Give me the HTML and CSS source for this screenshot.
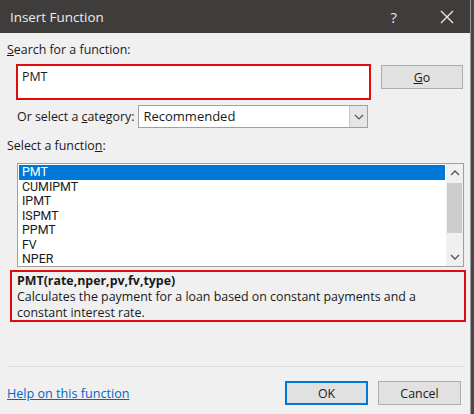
FILE: index.html
```html
<!DOCTYPE html>
<html>
<head>
<meta charset="utf-8">
<link rel="stylesheet" href="styles.css">
</head>
<body>
<div class="dialog">
  <div class="titlebar">
    <span class="title">Insert Function</span>
    <span class="help">?</span>
    <svg class="close" width="14" height="14" viewBox="0 0 14 14"><path d="M1 1 L13 13 M13 1 L1 13" stroke="#e6e6e6" stroke-width="1.4"/></svg>
  </div>
  <div class="content">
    <div class="label search-label"><u>S</u>earch for a function:</div>
    <div class="search-row">
      <div class="search-box">PMT</div>
      <div class="btn go"><u>G</u>o</div>
    </div>
    <div class="cat-row">
      <span class="label">Or select a <u>c</u>ategory:</span>
      <div class="select">
        <span class="select-text">Recommended</span>
        <span class="select-arrow"><svg width="10" height="6" viewBox="0 0 10 6"><path d="M1 1 L5 5 L9 1" fill="none" stroke="#555" stroke-width="1.2"/></svg></span>
      </div>
    </div>
    <div class="label func-label">Select a functio<u>n</u>:</div>
    <div class="listbox">
      <ul class="items">
        <li class="sel">PMT</li>
        <li>CUMIPMT</li>
        <li>IPMT</li>
        <li>ISPMT</li>
        <li>PPMT</li>
        <li>FV</li>
        <li>NPER</li>
      </ul>
      <div class="scrollbar">
        <svg class="arr" width="10" height="6" viewBox="0 0 10 6"><path d="M1 5 L5 1 L9 5" fill="none" stroke="#555" stroke-width="1.4"/></svg>
        <div class="track"><div class="thumb"></div></div>
        <svg class="arr" width="10" height="6" viewBox="0 0 10 6"><path d="M1 1 L5 5 L9 1" fill="none" stroke="#555" stroke-width="1.4"/></svg>
      </div>
    </div>
    <div class="desc">
      <div class="sig">PMT(rate,nper,pv,fv,type)</div>
      <div class="desc-text">Calculates the payment for a loan based on constant payments and a constant interest rate.</div>
    </div>
    <div class="separator"></div>
    <div class="footer">
      <a class="link" href="#">Help on this function</a>
      <div class="buttons">
        <div class="btn ok">OK</div>
        <div class="btn cancel">Cancel</div>
      </div>
    </div>
  </div>
</div>
</body>
</html>
```

FILE: styles.css
```css
html, body {
  margin: 0;
  padding: 0;
  background: #4a4847;
  height: 414px;
  overflow: hidden;
}
body {
  font-family: "Open Sans", "Noto Sans", sans-serif;
  font-size: 12.4px;
  color: #1a1a1a;
}
.dialog {
  width: 470px;
  height: 414px;
  background: #f0f0f0;
  border-right: 1px solid #9a9a9a;
  display: flex;
  flex-direction: column;
}
.titlebar {
  height: 33px;
  background: #3f3d3b;
  display: flex;
  align-items: center;
  padding-left: 10px;
  flex-shrink: 0;
}
.title {
  color: #ececec;
  font-size: 13.4px;
  flex: 1;
}
.help {
  color: #e6e6e6;
  font-size: 15px;
  margin-right: 43px;
}
.close {
  margin-right: 16px;
}
.content {
  padding: 0 7px;
  display: flex;
  flex-direction: column;
}
.label {
  line-height: 15px;
}
.search-label {
  margin-top: 9px;
}
.search-row {
  display: flex;
  margin-top: 7px;
}
.search-box {
  margin-left: 9px;
  width: 350px;
  border: 2px solid #e00c0c;
  background: #fff;
  padding: 4px 0 0 4px;
  box-sizing: content-box;
  height: 28px;
  line-height: 13px;
}
.btn {
  width: 81px;
  height: 22px;
  border: 1px solid #adadad;
  background: #e1e1e1;
  display: flex;
  align-items: center;
  justify-content: center;
}
.go {
  margin-left: 10px;
  margin-top: 1px;
}
.cat-row {
  display: flex;
  align-items: center;
  margin-top: 5px;
  padding-left: 10px;
}
.select {
  margin-left: 4px;
  width: 228px;
  height: 21px;
  border: 1px solid #a0a0a0;
  background: #fff;
  display: flex;
}
.select-text {
  flex: 1;
  padding-left: 4px;
  line-height: 21px;
  font-size: 13px;
}
.select-arrow {
  width: 17px;
  background: #e5e5e5;
  border-left: 1px solid #c8c8c8;
  display: flex;
  align-items: center;
  justify-content: center;
}
.func-label {
  margin-top: 10px;
}
.listbox {
  margin-top: 10px;
  margin-left: 10px;
  width: 445px;
  height: 102px;
  border: 1px solid #a0a0a0;
  background: #fff;
  display: flex;
}
.items {
  list-style: none;
  margin: 0;
  padding: 1px 0 0 1px;
  flex: 1;
  font-family: Roboto, "Liberation Sans", sans-serif;
}
.items li {
  height: 14.5px;
  line-height: 14.5px;
  padding-left: 3px;
  font-size: 12.4px;
}
.items li.sel {
  background: #0078d7;
  color: #fff;
  margin-right: 1px;
}
.scrollbar {
  width: 17px;
  background: #f0f0f0;
  display: flex;
  flex-direction: column;
  align-items: center;
}
.arr {
  margin: 6px 0;
}
.track {
  flex: 1;
  width: 100%;
  padding-top: 1px;
}
.thumb {
  margin: 0 auto;
  width: 15px;
  height: 50px;
  background: #cdcdcd;
}
.desc {
  margin-top: 3px;
  margin-left: 3px;
  height: 48px;
  border: 2px solid #e00c0c;
  padding-left: 5px;
  box-sizing: content-box;
  width: 447px;
}
.sig {
  font-weight: bold;
  line-height: 16px;
  margin-top: 1px;
}
.desc-text {
  line-height: 15.5px;
  padding-right: 30px;
}
.separator {
  margin-top: 44px;
  height: 1px;
  background: #dadada;
  width: 457px;
}
.footer {
  display: flex;
  align-items: center;
  justify-content: space-between;
  margin-top: 14px;
}
.link {
  color: #0066cc;
  text-decoration: underline;
  font-size: 12.6px;
}
.buttons {
  display: flex;
  gap: 10px;
  margin-right: 2px;
}
.ok {
  border: 2px solid #0078d7;
  width: 79px;
  height: 20px;
}
```
